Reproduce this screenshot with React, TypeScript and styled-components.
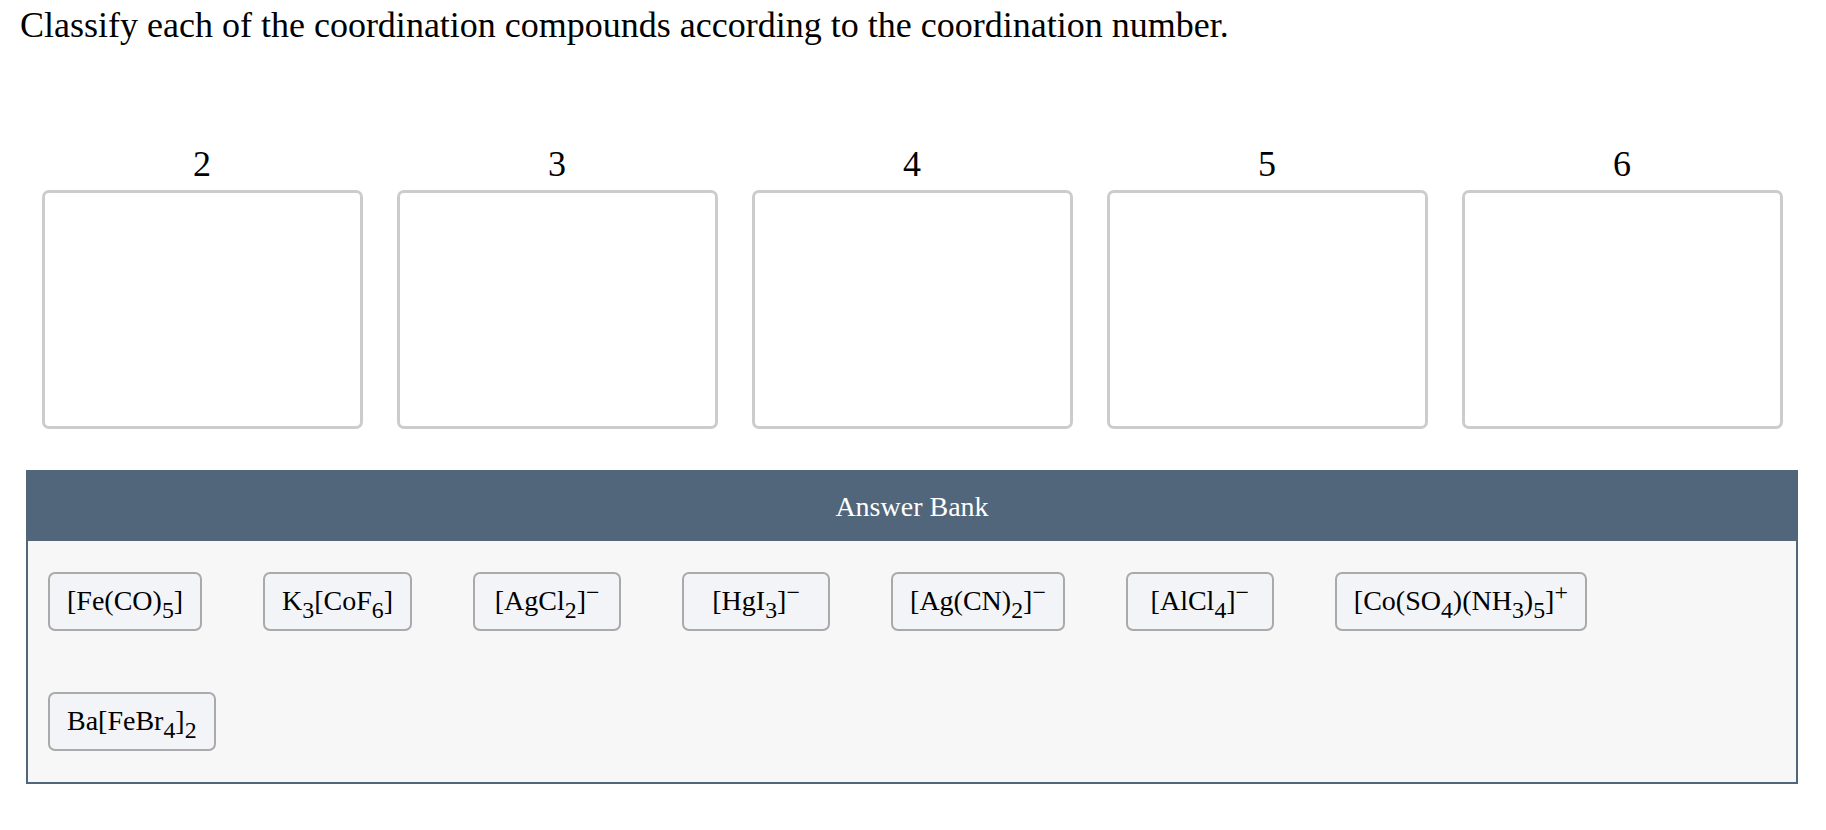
import React from "react";
import styled, { createGlobalStyle } from "styled-components";

const GlobalStyle = createGlobalStyle`
  html, body {
    margin: 0;
    padding: 0;
    background: #ffffff;
  }
  body {
    font-family: "Liberation Serif", "Times New Roman", serif;
    color: #000000;
  }
`;

type Part = { text: string; sub?: string; sup?: string };

interface Compound {
  id: string;
  parts: Part[];
}

const bins = ["2", "3", "4", "5", "6"];

const compounds: Compound[] = [
  { id: "fe", parts: [{ text: "[Fe(CO)", sub: "5" }, { text: "]" }] },
  { id: "k3", parts: [{ text: "K", sub: "3" }, { text: "[CoF", sub: "6" }, { text: "]" }] },
  { id: "agcl", parts: [{ text: "[AgCl", sub: "2" }, { text: "]", sup: "\u2212" }] },
  { id: "hgi", parts: [{ text: "[HgI", sub: "3" }, { text: "]", sup: "\u2212" }] },
  { id: "agcn", parts: [{ text: "[Ag(CN)", sub: "2" }, { text: "]", sup: "\u2212" }] },
  { id: "alcl", parts: [{ text: "[AlCl", sub: "4" }, { text: "]", sup: "\u2212" }] },
  {
    id: "co",
    parts: [
      { text: "[Co(SO", sub: "4" },
      { text: ")(NH", sub: "3" },
      { text: ")", sub: "5" },
      { text: "]", sup: "+" },
    ],
  },
  { id: "ba", parts: [{ text: "Ba[FeBr", sub: "4" }, { text: "]", sub: "2" }] },
];

const Formula: React.FC<{ parts: Part[] }> = ({ parts }) => (
  <FormulaText>
    {parts.map((p, i) => (
      <React.Fragment key={i}>
        {p.text}
        {p.sub && <Sub>{p.sub}</Sub>}
        {p.sup && <Sup>{p.sup}</Sup>}
      </React.Fragment>
    ))}
  </FormulaText>
);

const App: React.FC = () => {
  return (
    <Page>
      <GlobalStyle />
      <Title>Classify each of the coordination compounds according to the coordination number.</Title>
      <Workspace>
        <BinRow>
          {bins.map((label) => (
            <Bin key={label}>
              <BinLabel>{label}</BinLabel>
              <DropBox />
            </Bin>
          ))}
        </BinRow>
        <Bank>
          <BankHeader>Answer Bank</BankHeader>
          <BankBody>
            {compounds.map((c) => (
              <Chip key={c.id}>
                <Formula parts={c.parts} />
              </Chip>
            ))}
          </BankBody>
        </Bank>
      </Workspace>
    </Page>
  );
};

export default App;

const Page = styled.div`
  padding: 5px 0 0 20px;
`;

const Title = styled.p`
  margin: 0;
  font-size: 36px;
  line-height: 41px;
`;

const Workspace = styled.div`
  width: 1772px;
  margin: 98px 0 0 6px;
`;

const BinRow = styled.div`
  display: grid;
  grid-template-columns: repeat(5, 321px);
  column-gap: 34px;
  justify-content: center;
`;

const Bin = styled.div`
  display: flex;
  flex-direction: column;
`;

const BinLabel = styled.div`
  font-size: 36px;
  line-height: 41px;
  text-align: center;
  margin-bottom: 5px;
`;

const DropBox = styled.div`
  box-sizing: border-box;
  height: 239px;
  border: 3px solid #cccccc;
  border-radius: 7px;
  background: #ffffff;
`;

const Bank = styled.div`
  margin-top: 41px;
  border: 2px solid #51667b;
`;

const BankHeader = styled.div`
  height: 69px;
  display: flex;
  align-items: center;
  justify-content: center;
  background: #51667b;
  color: #ffffff;
  font-size: 28px;
`;

const BankBody = styled.div`
  background: #f7f7f7;
  padding: 31px 18px 31px 20px;
  display: flex;
  flex-wrap: wrap;
  gap: 61px 61px;
`;

const Chip = styled.div`
  box-sizing: border-box;
  min-width: 148px;
  height: 59px;
  padding: 0 17px 2px;
  display: flex;
  align-items: center;
  justify-content: center;
  border: 2px solid #aaaaaa;
  border-radius: 7px;
  background: #f2f4f8;
  font-size: 28px;
  white-space: nowrap;
`;

const FormulaText = styled.span`
  line-height: 32px;
`;

const Sub = styled.sub`
  font-size: 0.85em;
  line-height: 0;
  vertical-align: -0.32em;
`;

const Sup = styled.sup`
  font-size: 0.85em;
  line-height: 0;
  vertical-align: 0.42em;
`;
